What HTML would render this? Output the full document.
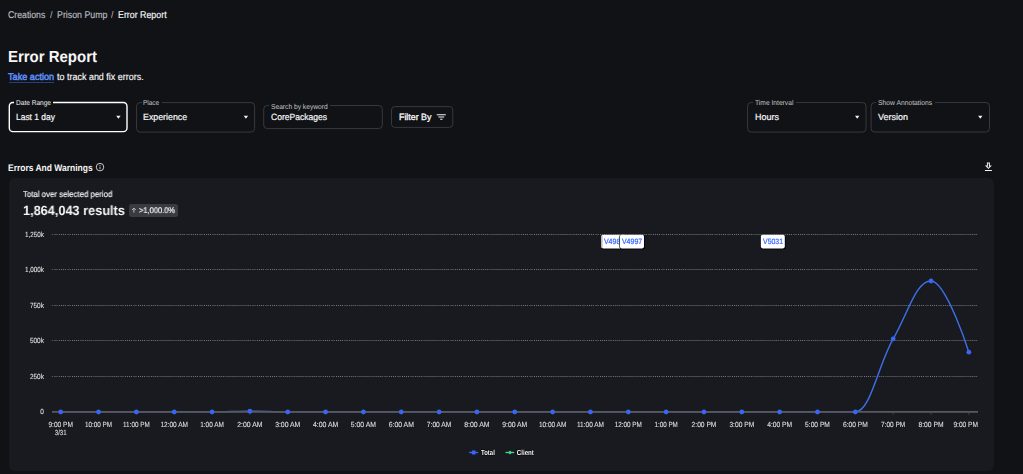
<!DOCTYPE html>
<html lang="en">
<head>
<meta charset="utf-8">
<title>Error Report</title>
<style>
html,body,p,h1,h2,nav,section,main,label{margin:0;padding:0;}
body{width:1023px;height:474px;overflow:hidden;background:#111216;position:relative;
 font-family:"Liberation Sans",Arial,sans-serif;color:#f7f7f8;text-rendering:geometricPrecision;}
.t{position:absolute;white-space:pre;line-height:1;transform-origin:0 0;margin:0;padding:0;display:block;text-decoration:none;}
.lbl{background:#111216;}
.g{will-change:transform;}
.m0{-webkit-text-stroke:0.15px currentColor;}
.m{-webkit-text-stroke:0.2px currentColor;}
.m2{-webkit-text-stroke:0.32px currentColor;}
.m3{-webkit-text-stroke:0.5px currentColor;}
.card{position:absolute;left:8.7px;top:178.2px;width:985.5px;height:292.8px;background:#191a1f;border-radius:6px;}
.badge{position:absolute;left:128.9px;top:204.1px;width:49.3px;height:12.5px;background:#393b41;border-radius:2.5px;}
svg{position:absolute;left:0;top:0;overflow:visible;}
svg text{font-family:"Liberation Sans",Arial,sans-serif;}
</style>
</head>
<body>

<nav aria-label="breadcrumb">
<a class="t m0" style="left:7.96px;top:11.10px;font-size:9.8px;font-weight:400;color:#bbbcc0;transform:scaleX(0.8900);">Creations</a>
<span class="t" style="left:49.80px;top:11.10px;font-size:9.8px;font-weight:400;color:#bbbcc0;transform:scaleX(0.9091);">/</span>
<a class="t m0" style="left:56.52px;top:11.10px;font-size:9.8px;font-weight:400;color:#bbbcc0;transform:scaleX(0.9002);">Prison Pump</a>
<span class="t" style="left:111.00px;top:11.10px;font-size:9.8px;font-weight:400;color:#bbbcc0;transform:scaleX(0.9091);">/</span>
<span class="t m0" style="left:117.52px;top:11.10px;font-size:9.8px;font-weight:400;color:#f7f7f8;transform:scaleX(0.9016);">Error Report</span>
</nav>
<h1 class="t" style="left:8.26px;top:50.20px;font-size:16px;font-weight:700;color:#f7f7f8;transform:scaleX(0.9351);">Error Report</h1>
<p>
<a class="t m3" style="left:8.37px;top:73.00px;font-size:9.8px;font-weight:400;color:#5f90fb;transform:scaleX(0.9313);">Take action</a>
<span style="position:absolute;left:8.6px;top:82.0px;width:45.4px;height:0.8px;background:#293f7d"></span>
<span class="t m0" style="left:56.69px;top:73.00px;font-size:9.8px;font-weight:400;color:#f7f7f8;transform:scaleX(0.9152);">to track and fix errors.</span>
</p>
<section aria-label="filters">
<div class="field">
<svg width="1023" height="474" aria-hidden="true"><rect x="9.30" y="102.56" width="117.70" height="29.09" rx="3.6" fill="none" stroke="#ffffff" stroke-width="1.4"/></svg>
<div class="lbl" style="position:absolute;left:14.20px;top:101.06px;width:39.10px;height:3px"></div>
<label class="t" style="left:15.74px;top:99.90px;font-size:7.1px;font-weight:400;color:#f0f0f2;transform:scaleX(0.9243);">Date Range</label>
<span class="t m" style="left:15.60px;top:113.05px;font-size:9.1px;font-weight:400;color:#f7f7f8;transform:scaleX(0.9289);">Last 1 day</span>
</div>
<div class="field">
<svg width="1023" height="474" aria-hidden="true"><rect x="136.60" y="102.60" width="118.00" height="29.50" rx="3.6" fill="none" stroke="#3f4046" stroke-width="0.85"/></svg>
<div class="lbl" style="position:absolute;left:141.80px;top:101.10px;width:20.40px;height:3px"></div>
<label class="t" style="left:143.34px;top:99.90px;font-size:7.1px;font-weight:400;color:#c4c5c9;transform:scaleX(0.9118);">Place</label>
<span class="t m" style="left:143.37px;top:113.05px;font-size:9.1px;font-weight:400;color:#f7f7f8;transform:scaleX(0.9690);">Experience</span>
</div>
<div class="field">
<svg width="1023" height="474" aria-hidden="true"><rect x="263.70" y="105.50" width="118.60" height="23.10" rx="3.6" fill="none" stroke="#3f4046" stroke-width="0.85"/></svg>
<div class="lbl" style="position:absolute;left:269.10px;top:104.00px;width:60.80px;height:3px"></div>
<label class="t" style="left:270.75px;top:103.70px;font-size:7.1px;font-weight:400;color:#c4c5c9;transform:scaleX(0.9395);">Search by keyword</label>
<span class="t m" style="left:270.73px;top:113.05px;font-size:9.1px;font-weight:400;color:#f7f7f8;transform:scaleX(0.9410);">CorePackages</span>
</div>
<div class="field">
<svg width="1023" height="474" aria-hidden="true"><rect x="391.50" y="106.60" width="61.30" height="20.80" rx="3.3" fill="none" stroke="#3f4046" stroke-width="0.85"/></svg>
<span class="t m2" style="left:399.07px;top:113.15px;font-size:9.1px;font-weight:400;color:#f7f7f8;transform:scaleX(0.9716);">Filter By</span>
</div>
<div class="field">
<svg width="1023" height="474" aria-hidden="true"><rect x="747.60" y="102.56" width="118.40" height="29.54" rx="3.6" fill="none" stroke="#3f4046" stroke-width="0.85"/></svg>
<div class="lbl" style="position:absolute;left:753.20px;top:101.06px;width:42.70px;height:3px"></div>
<label class="t" style="left:755.08px;top:99.90px;font-size:7.1px;font-weight:400;color:#c4c5c9;transform:scaleX(0.9421);">Time Interval</label>
<span class="t m" style="left:754.56px;top:113.05px;font-size:9.1px;font-weight:400;color:#f7f7f8;transform:scaleX(0.9849);">Hours</span>
</div>
<div class="field">
<svg width="1023" height="474" aria-hidden="true"><rect x="871.10" y="102.56" width="118.40" height="29.44" rx="3.6" fill="none" stroke="#3f4046" stroke-width="0.85"/></svg>
<div class="lbl" style="position:absolute;left:876.30px;top:101.06px;width:58.30px;height:3px"></div>
<label class="t" style="left:877.94px;top:99.90px;font-size:7.1px;font-weight:400;color:#c4c5c9;transform:scaleX(0.9514);">Show Annotations</label>
<span class="t m" style="left:878.40px;top:113.05px;font-size:9.1px;font-weight:400;color:#f7f7f8;transform:scaleX(0.9849);">Version</span>
</div>
<svg width="1023" height="474" aria-hidden="true"><g stroke="#f2f2f3" stroke-width="1.05" fill="none"><path d="M436.8 114.7H445.8M438.4 117H444.2M440.2 119.2H442.5"/></g><g fill="#f2f2f3"><path d="M116.20 115.8H120.60L118.40 118.7Z"/><path d="M243.70 115.8H248.10L245.90 118.7Z"/><path d="M855.00 115.8H859.40L857.20 118.7Z"/><path d="M978.10 115.8H982.50L980.30 118.7Z"/></g></svg>
</section>
<h2 class="t" style="left:8.05px;top:163.60px;font-size:9.6px;font-weight:700;color:#f7f7f8;transform:scaleX(0.8834);">Errors And Warnings</h2>
<svg width="1023" height="474" aria-hidden="true"><circle cx="100" cy="167.1" r="3.75" fill="none" stroke="#e6e6e8" stroke-width="0.85"/><rect x="99.55" y="166.6" width="0.9" height="2.6" fill="#cfcfd2"/><rect x="99.55" y="164.9" width="0.9" height="0.9" fill="#cfcfd2"/><g transform="translate(982.4 161.1) scale(0.5)" fill="#f4f4f5"><path d="M13 5v6h1.17L12 13.17 9.83 11H11V5h2m2-2H9v6H5l7 7 7-7h-4V3zm4 15H5v2h14v-2z"/></g></svg>
<main>
<div class="card"></div>
<div class="t m0 g" style="left:23.08px;top:189.70px;font-size:8.5px;font-weight:400;color:#f4f4f6;transform:scaleX(0.9216);">Total over selected period</div>
<div class="t g" style="left:22.67px;top:203.60px;font-size:13.4px;font-weight:700;color:#f7f7f8;transform:scaleX(0.9504);">1,864,043 results</div>
<div class="badge"></div>
<span class="t m g" style="left:139.16px;top:207.20px;font-size:8.2px;font-weight:400;color:#f2f2f4;transform:scaleX(0.9161);">&gt;1,000.0%</span>
<svg width="1023" height="474" aria-hidden="true"><path d="M133.9 212.6V208.3M132.0 210.0L133.9 208.1L135.8 210.0" stroke="#cfcfd3" stroke-width="0.85" fill="none"/></svg>
<svg width="1023" height="474" role="img" aria-label="Errors and warnings chart" style="will-change:transform">
<g stroke="#7b7c81" stroke-width="1" stroke-dashoffset="11.2" stroke-dasharray="0.45 0.4 0.45 0.4 0.45 0.4 0.45 0.4 0.45 1.05 1 1.1 1 1 1 1 1 1.2" fill="none">
<path d="M51.9 376.50H978"/>
<path d="M51.9 340.50H978"/>
<path d="M51.9 305.50H978"/>
<path d="M51.9 269.50H978"/>
<path d="M51.9 234.50H978"/>
</g>
<g fill="#dededf" stroke="#dededf" stroke-width="0.12" font-size="7.4" text-anchor="end">
<text x="43.9" y="413.70" textLength="3.6" lengthAdjust="spacingAndGlyphs">0</text>
<text x="43.9" y="378.70" textLength="14.0" lengthAdjust="spacingAndGlyphs">250k</text>
<text x="43.9" y="342.70" textLength="14.0" lengthAdjust="spacingAndGlyphs">500k</text>
<text x="43.9" y="307.70" textLength="14.0" lengthAdjust="spacingAndGlyphs">750k</text>
<text x="43.9" y="271.70" textLength="19.0" lengthAdjust="spacingAndGlyphs">1,000k</text>
<text x="43.9" y="236.70" textLength="19.0" lengthAdjust="spacingAndGlyphs">1,250k</text>
</g>
<path d="M60.70 411.90C60.70 411.90 83.40 411.90 98.54 411.90C113.68 411.90 121.24 411.90 136.38 411.90C151.52 411.90 159.08 411.90 174.22 411.90C189.36 411.90 196.92 411.90 212.06 411.90C227.20 411.90 234.76 411.26 249.90 411.26C265.04 411.26 272.60 411.90 287.74 411.90C302.88 411.90 310.44 411.90 325.58 411.90C340.72 411.90 348.28 411.90 363.42 411.90C378.56 411.90 386.12 411.90 401.26 411.90C416.40 411.90 423.96 411.90 439.10 411.90C454.24 411.90 461.80 411.90 476.94 411.90C492.08 411.90 499.64 411.90 514.78 411.90C529.92 411.90 537.48 411.90 552.62 411.90C567.76 411.90 575.32 411.90 590.46 411.90C605.60 411.90 613.16 411.90 628.30 411.90C643.44 411.90 651.00 411.90 666.14 411.90C681.28 411.90 688.84 411.90 703.98 411.90C719.12 411.90 726.68 411.90 741.82 411.90C756.96 411.90 764.52 411.90 779.66 411.90C794.80 411.90 802.36 411.90 817.50 411.90C832.64 411.90 840.20 411.90 855.34 411.90C870.48 411.90 878.04 365.04 893.18 338.85C908.32 312.67 915.88 280.98 931.02 280.98C946.16 280.98 968.86 352.19 968.86 352.19" fill="none" stroke="#3d6fe8" stroke-width="1.42" stroke-linejoin="round" stroke-linecap="round"/>
<path d="M52 411.9H978" stroke="#58595e" stroke-width="1.9" fill="none"/>
<g stroke="#58595e" stroke-width="0.7">
<path d="M60.70 412.5V414.6"/>
<path d="M98.54 412.5V414.6"/>
<path d="M136.38 412.5V414.6"/>
<path d="M174.22 412.5V414.6"/>
<path d="M212.06 412.5V414.6"/>
<path d="M249.90 412.5V414.6"/>
<path d="M287.74 412.5V414.6"/>
<path d="M325.58 412.5V414.6"/>
<path d="M363.42 412.5V414.6"/>
<path d="M401.26 412.5V414.6"/>
<path d="M439.10 412.5V414.6"/>
<path d="M476.94 412.5V414.6"/>
<path d="M514.78 412.5V414.6"/>
<path d="M552.62 412.5V414.6"/>
<path d="M590.46 412.5V414.6"/>
<path d="M628.30 412.5V414.6"/>
<path d="M666.14 412.5V414.6"/>
<path d="M703.98 412.5V414.6"/>
<path d="M741.82 412.5V414.6"/>
<path d="M779.66 412.5V414.6"/>
<path d="M817.50 412.5V414.6"/>
<path d="M855.34 412.5V414.6"/>
<path d="M893.18 412.5V414.6"/>
<path d="M931.02 412.5V414.6"/>
<path d="M968.86 412.5V414.6"/>
</g>
<g fill="#3766f5">
<circle cx="60.70" cy="411.90" r="2.4"/>
<circle cx="98.54" cy="411.90" r="2.4"/>
<circle cx="136.38" cy="411.90" r="2.4"/>
<circle cx="174.22" cy="411.90" r="2.4"/>
<circle cx="212.06" cy="411.90" r="2.4"/>
<circle cx="249.90" cy="411.26" r="2.4"/>
<circle cx="287.74" cy="411.90" r="2.4"/>
<circle cx="325.58" cy="411.90" r="2.4"/>
<circle cx="363.42" cy="411.90" r="2.4"/>
<circle cx="401.26" cy="411.90" r="2.4"/>
<circle cx="439.10" cy="411.90" r="2.4"/>
<circle cx="476.94" cy="411.90" r="2.4"/>
<circle cx="514.78" cy="411.90" r="2.4"/>
<circle cx="552.62" cy="411.90" r="2.4"/>
<circle cx="590.46" cy="411.90" r="2.4"/>
<circle cx="628.30" cy="411.90" r="2.4"/>
<circle cx="666.14" cy="411.90" r="2.4"/>
<circle cx="703.98" cy="411.90" r="2.4"/>
<circle cx="741.82" cy="411.90" r="2.4"/>
<circle cx="779.66" cy="411.90" r="2.4"/>
<circle cx="817.50" cy="411.90" r="2.4"/>
<circle cx="855.34" cy="411.90" r="2.4"/>
<circle cx="893.18" cy="338.85" r="2.4"/>
<circle cx="931.02" cy="280.98" r="2.4"/>
<circle cx="968.86" cy="352.19" r="2.4"/>
</g>
<g fill="#dededf" stroke="#dededf" stroke-width="0.12" font-size="7.4" text-anchor="middle">
<text x="60.70" y="426.7" textLength="24.6" lengthAdjust="spacingAndGlyphs">9:00 PM</text>
<text x="98.54" y="426.7" textLength="27.0" lengthAdjust="spacingAndGlyphs">10:00 PM</text>
<text x="136.38" y="426.7" textLength="26.6" lengthAdjust="spacingAndGlyphs">11:00 PM</text>
<text x="174.22" y="426.7" textLength="27.6" lengthAdjust="spacingAndGlyphs">12:00 AM</text>
<text x="212.06" y="426.7" textLength="23.7" lengthAdjust="spacingAndGlyphs">1:00 AM</text>
<text x="249.90" y="426.7" textLength="25.2" lengthAdjust="spacingAndGlyphs">2:00 AM</text>
<text x="287.74" y="426.7" textLength="25.2" lengthAdjust="spacingAndGlyphs">3:00 AM</text>
<text x="325.58" y="426.7" textLength="25.4" lengthAdjust="spacingAndGlyphs">4:00 AM</text>
<text x="363.42" y="426.7" textLength="25.2" lengthAdjust="spacingAndGlyphs">5:00 AM</text>
<text x="401.26" y="426.7" textLength="25.2" lengthAdjust="spacingAndGlyphs">6:00 AM</text>
<text x="439.10" y="426.7" textLength="24.6" lengthAdjust="spacingAndGlyphs">7:00 AM</text>
<text x="476.94" y="426.7" textLength="25.4" lengthAdjust="spacingAndGlyphs">8:00 AM</text>
<text x="514.78" y="426.7" textLength="25.0" lengthAdjust="spacingAndGlyphs">9:00 AM</text>
<text x="552.62" y="426.7" textLength="27.4" lengthAdjust="spacingAndGlyphs">10:00 AM</text>
<text x="590.46" y="426.7" textLength="27.0" lengthAdjust="spacingAndGlyphs">11:00 AM</text>
<text x="628.30" y="426.7" textLength="27.2" lengthAdjust="spacingAndGlyphs">12:00 PM</text>
<text x="666.14" y="426.7" textLength="23.3" lengthAdjust="spacingAndGlyphs">1:00 PM</text>
<text x="703.98" y="426.7" textLength="24.8" lengthAdjust="spacingAndGlyphs">2:00 PM</text>
<text x="741.82" y="426.7" textLength="24.8" lengthAdjust="spacingAndGlyphs">3:00 PM</text>
<text x="779.66" y="426.7" textLength="25.0" lengthAdjust="spacingAndGlyphs">4:00 PM</text>
<text x="817.50" y="426.7" textLength="24.8" lengthAdjust="spacingAndGlyphs">5:00 PM</text>
<text x="855.34" y="426.7" textLength="24.8" lengthAdjust="spacingAndGlyphs">6:00 PM</text>
<text x="893.18" y="426.7" textLength="24.2" lengthAdjust="spacingAndGlyphs">7:00 PM</text>
<text x="931.02" y="426.7" textLength="25.0" lengthAdjust="spacingAndGlyphs">8:00 PM</text>
<text x="965.70" y="426.7" textLength="24.6" lengthAdjust="spacingAndGlyphs">9:00 PM</text>
<text x="60.70" y="435.2" textLength="11.9" lengthAdjust="spacingAndGlyphs">3/31</text>
</g>
<rect x="601.20" y="235.2" width="25.70" height="14.3" rx="2" fill="#000" opacity="0.9"/>
<rect x="600.60" y="234.8" width="25.40" height="13.6" rx="1.8" fill="#1b1b1f" opacity="0.9"/>
<rect x="601.30" y="234.8" width="24.70" height="13.6" rx="1.8" fill="#ffffff"/>
<rect x="601.30" y="235.6" width="1.3" height="12.2" fill="#b9b9bd"/>
<text x="603.90" y="244.0" font-size="7.7" fill="#2f63ff" stroke="#2f63ff" stroke-width="0.22" textLength="20.40" lengthAdjust="spacingAndGlyphs">V4986</text>
<rect x="619.80" y="235.2" width="25.10" height="14.3" rx="2" fill="#000" opacity="0.9"/>
<rect x="619.20" y="234.8" width="24.80" height="13.6" rx="1.8" fill="#1b1b1f" opacity="0.9"/>
<rect x="619.90" y="234.8" width="24.10" height="13.6" rx="1.8" fill="#ffffff"/>
<text x="621.90" y="244.0" font-size="7.7" fill="#2f63ff" stroke="#2f63ff" stroke-width="0.22" textLength="20.40" lengthAdjust="spacingAndGlyphs">V4997</text>
<rect x="760.80" y="235.2" width="24.90" height="14.3" rx="2" fill="#000" opacity="0.9"/>
<rect x="760.20" y="234.8" width="24.60" height="13.6" rx="1.8" fill="#1b1b1f" opacity="0.9"/>
<rect x="760.90" y="234.8" width="23.90" height="13.6" rx="1.8" fill="#ffffff"/>
<text x="763.10" y="244.0" font-size="7.7" fill="#2f63ff" stroke="#2f63ff" stroke-width="0.22" textLength="19.90" lengthAdjust="spacingAndGlyphs">V5031</text>
<g>
<path d="M469.1 452.5H478.2" stroke="#3766f5" stroke-width="1.3"/><circle cx="473.7" cy="452.5" r="2.3" fill="#3766f5"/>
<text x="481.0" y="455.1" font-size="7.33" font-weight="700" fill="#f6f6f7" stroke="#08080a" stroke-width="1.1" stroke-linejoin="round" paint-order="stroke" textLength="13.8" lengthAdjust="spacingAndGlyphs">Total</text>
<path d="M505.5 452.5H514.2" stroke="#3ddc84" stroke-width="1.3"/><path d="M510 450.4L512.1 452.5L510 454.6L507.9 452.5Z" fill="#3ddc84"/>
<text x="516.8" y="455.1" font-size="7.33" font-weight="700" fill="#f6f6f7" stroke="#08080a" stroke-width="1.1" stroke-linejoin="round" paint-order="stroke" textLength="17.1" lengthAdjust="spacingAndGlyphs">Client</text>
</g>
</svg>
</main>
</body></html>
